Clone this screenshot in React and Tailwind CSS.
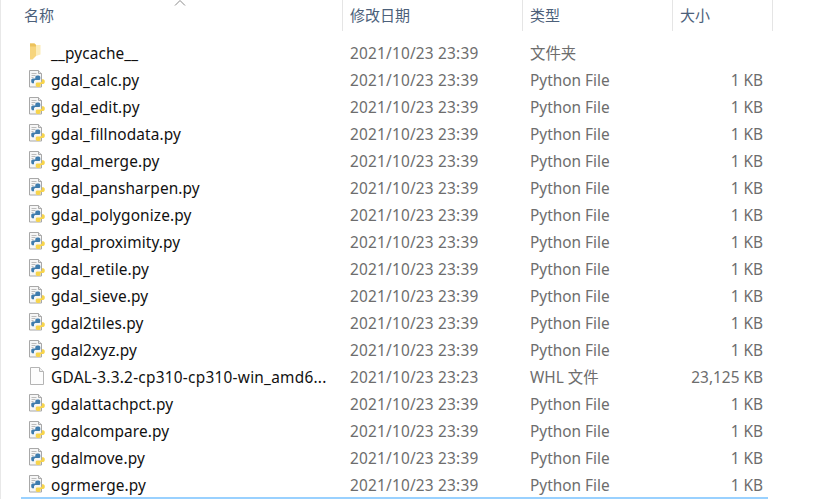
import React from 'react'

const files = [
  { name: '__pycache__', date: '2021/10/23 23:39', type: '文件夹', size: '', icon: 'folder' },
  { name: 'gdal_calc.py' },
  { name: 'gdal_edit.py' },
  { name: 'gdal_fillnodata.py' },
  { name: 'gdal_merge.py' },
  { name: 'gdal_pansharpen.py' },
  { name: 'gdal_polygonize.py' },
  { name: 'gdal_proximity.py' },
  { name: 'gdal_retile.py' },
  { name: 'gdal_sieve.py' },
  { name: 'gdal2tiles.py' },
  { name: 'gdal2xyz.py' },
  { name: 'GDAL-3.3.2-cp310-cp310-win_amd6...', date: '2021/10/23 23:23', type: 'WHL 文件', size: '23,125 KB', icon: 'blank' },
  { name: 'gdalattachpct.py' },
  { name: 'gdalcompare.py' },
  { name: 'gdalmove.py' },
  { name: 'ogrmerge.py' },
]

function FolderIcon() {
  return (
    <svg width="16" height="18" viewBox="0 0 16 18" className="block">
      <path d="M1 .5h4.500L7 2v11l-3.500 3.500H1z" fill="#f7d57c" />
      <path d="M7 2h4.500v9.500L7 13z" fill="#fcecb8" />
      <path d="M1 .5h4.500L7 2v1.500H1z" fill="#ecc25c" />
    </svg>
  )
}

function BlankIcon() {
  return (
    <svg width="16" height="18" viewBox="0 0 16 18" className="block">
      <path d="M1.500.5h9l4 4v13h-13z" fill="#fdfdfd" stroke="#b4b4b4" />
      <path d="M10.500.5v4h4" fill="#f0f0f0" stroke="#b4b4b4" />
    </svg>
  )
}

function PythonIcon() {
  return (
    <svg width="16" height="18" viewBox="0 0 16 18" className="block">
      <path d="M.5.5h9l3 3v13.500H.5z" fill="#f6f6f6" stroke="#a8a8a8" />
      <path d="M9.500.5v3h3" fill="#e4e4e4" stroke="#a8a8a8" />
      <path d="M2.500 3.500h5M2.500 5.500h4M2.500 7.500h2M2.500 9.500h1" stroke="#bcbcbc" />
      <path d="M9 5.500c-1.800 0-2.700.6-2.700 1.800V8.500H3.900C2.700 8.500 2.200 9.600 2.200 10.900c0 1.400.6 2.300 1.700 2.300h1.100v-1.500c0-1 .7-1.700 1.800-1.700h2.900c.9 0 1.600-.7 1.600-1.600V7.300c0-1.200-.9-1.800-2.300-1.800z" fill="#3f7cad" />
      <path d="M9 17c1.800 0 2.700-.6 2.700-1.800v-1.200h2.400c1.200 0 1.700-1.100 1.700-2.400 0-1.400-.6-2.300-1.700-2.300H13v1.500c0 1-.7 1.700-1.800 1.700H8.300c-.9 0-1.600.7-1.600 1.600v1.100C6.700 16.400 7.600 17 9 17z" fill="#f7d44c" />
    </svg>
  )
}

function FileIcon({ kind }) {
  if (kind === 'folder') return <FolderIcon />
  if (kind === 'blank') return <BlankIcon />
  return <PythonIcon />
}

function HeaderCell({ label, className }) {
  return (
    <div className={`h-[31px] pl-[7px] pb-[1px] border-r border-[#e5e5e5] flex items-center text-[15px] text-[#4c607a] ${className}`}>
      {label}
    </div>
  )
}

export default function App() {
  return (
    <div
      className="w-[821px] h-[499px] overflow-hidden bg-white border-l border-[#e8e8e8] text-[15.4px]"
      style={{ fontFamily: '"Noto Sans", "Noto Sans CJK SC", sans-serif' }}
    >
      <div className="relative flex pl-[16px]">
        <HeaderCell label="名称" className="w-[326px]" />
        <HeaderCell label="修改日期" className="w-[180px]" />
        <HeaderCell label="类型" className="w-[150px]" />
        <HeaderCell label="大小" className="w-[100px]" />
        <svg width="12" height="6" viewBox="0 0 12 6" className="absolute left-[173px] top-0">
          <path d="M1 5.500 6 .5l5 5" fill="none" stroke="#8a8a8a" />
        </svg>
      </div>
      <div className="mt-[9px] ml-[20px] w-[747px] h-[459px] border-b-2 border-[#99d1ff]">
        {files.map((f) => (
          <div key={f.name} className="h-[27px] flex items-center">
            <div className={`w-[322px] flex items-center pl-[8px] text-[#111] whitespace-nowrap ${f.icon === 'blank' ? 'tracking-[0.25px]' : 'tracking-[0.12px]'}`}>
              <span className="w-[22px] shrink-0 pb-[2px]"><FileIcon kind={f.icon} /></span>
              {f.name}
            </div>
            <div className="w-[180px] pl-[7px] text-[#6d6d6d] tracking-[0.2px]">{f.date || '2021/10/23 23:39'}</div>
            <div className="w-[150px] pl-[7px] text-[#6d6d6d]">{f.type || 'Python File'}</div>
            <div className="w-[91px] pr-[1px] text-right text-[#6d6d6d]">{f.size ?? '1 KB'}</div>
          </div>
        ))}
      </div>
    </div>
  )
}
